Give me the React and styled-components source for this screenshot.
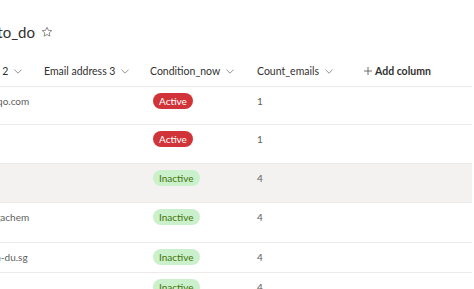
import styled, { createGlobalStyle } from "styled-components"

const GlobalStyle = createGlobalStyle`
	html, body {
		margin: 0;
		padding: 0;
		background: #ffffff;
		overflow: hidden;
	}
	body {
		font-family: "Segoe UI", Lato, "Open Sans", sans-serif;
		color: #323130;
	}
`

const Viewport = styled.div`
	width: 474px;
	height: 289px;
	overflow: hidden;
`

const TitleBar = styled.div`
	height: 56px;
	display: flex;
	align-items: flex-start;
	gap: 6px;
	padding-top: 22px;
	box-sizing: border-box;
`

// the title is wider than the visible part; it overflows out to the left
const TitleClip = styled.div`
	width: 35px;
	display: flex;
	justify-content: flex-end;
	overflow: hidden;
`

const Title = styled.h1`
	margin: 0;
	font-size: 15px;
	line-height: 20px;
	font-weight: 400;
	white-space: nowrap;
	color: #323130;
`

const StarButton = styled.span`
	display: flex;
	align-items: center;
	height: 20px;
`

// the list is scrolled sideways, so its first column is partly out of view
const Scroller = styled.div`
	margin-left: -71px;
	width: 543px;
`

const Row = styled.div`
	display: grid;
	grid-template-columns: 107px 106px 107px 106px 117px;
	height: ${(p) => p.$h}px;
	box-sizing: border-box;
	border-bottom: 1px solid #edebe9;
	background: ${(p) => (p.$selected ? "#f3f2f1" : "#ffffff")};
`

const HeaderRow = styled(Row)`
	height: 31px;
	align-items: center;
`

const HeaderCell = styled.div`
	display: flex;
	align-items: center;
	gap: 6px;
	padding-left: 8px;
	font-size: 10.5px;
	white-space: nowrap;
	overflow: hidden;
	color: #323130;
`

const AddColumn = styled(HeaderCell)`
	padding-left: 9px;
	font-weight: 700;
	gap: 3px;
`

const Cell = styled.div`
	padding: 6px 0 0 ${(p) => p.$indent || 8}px;
	font-size: 10px;
	line-height: 16px;
	color: #605e5c;
	white-space: nowrap;
	overflow: hidden;
`

const Badge = styled.span`
	display: inline-block;
	margin-left: 3px;
	height: 16px;
	line-height: 16px;
	padding: 0 6px;
	border-radius: 8px;
	font-size: 10px;
	background: ${(p) => (p.$active ? "#d13438" : "#caf0cc")};
	color: ${(p) => (p.$active ? "#ffffff" : "#437406")};
`

const Chevron = () => (
	<svg width="8" height="5" viewBox="0 0 8 5" fill="none">
		<path d="M0.4 0.6 L4 4.2 L7.6 0.6" stroke="#8a8886" strokeWidth="0.9" />
	</svg>
)

const Star = () => (
	<svg width="12" height="12" viewBox="0 0 24 24" fill="none">
		<path
			d="M12 2.5 L14.8 8.6 L21.4 9.3 L16.4 13.8 L17.8 20.4 L12 17 L6.2 20.4 L7.6 13.8 L2.6 9.3 L9.2 8.6 Z"
			stroke="#605e5c"
			strokeWidth="1.4"
			strokeLinejoin="round"
		/>
	</svg>
)

const Plus = () => (
	<svg width="8" height="8" viewBox="0 0 8 8" fill="none">
		<path d="M4 0 V8 M0 4 H8" stroke="#605e5c" strokeWidth="0.9" />
	</svg>
)

const rows = [
	{ email: "info@sunvietqo.com", active: true, count: 1, h: 38 },
	{ email: "", active: true, count: 1, h: 39 },
	{ email: "", active: false, count: 4, h: 39, selected: true },
	{ email: "export@vinagachem", active: false, count: 4, h: 40 },
	{ email: "contact@tanh-du.sg", active: false, count: 4, h: 30 },
	{ email: "", active: false, count: 4, h: 40 },
]

const App = () => {
	return (
		<Viewport>
			<GlobalStyle />
			<TitleBar>
				<TitleClip>
					<Title>Emails_to_do</Title>
				</TitleClip>
				<StarButton>
					<Star />
				</StarButton>
			</TitleBar>
			<Scroller>
				<HeaderRow>
					<HeaderCell>
						Email address 2 <Chevron />
					</HeaderCell>
					<HeaderCell>
						Email address 3 <Chevron />
					</HeaderCell>
					<HeaderCell>
						Condition_now <Chevron />
					</HeaderCell>
					<HeaderCell>
						Count_emails <Chevron />
					</HeaderCell>
					<AddColumn>
						<Plus /> Add column
					</AddColumn>
				</HeaderRow>
				{rows.map((r, i) => (
					<Row key={i} $h={r.h} $selected={r.selected}>
						<Cell $indent={11}>{r.email}</Cell>
						<Cell />
						<Cell>
							<Badge $active={r.active}>{r.active ? "Active" : "Inactive"}</Badge>
						</Cell>
						<Cell>{r.count}</Cell>
						<Cell />
					</Row>
				))}
			</Scroller>
		</Viewport>
	)
}

export default App
